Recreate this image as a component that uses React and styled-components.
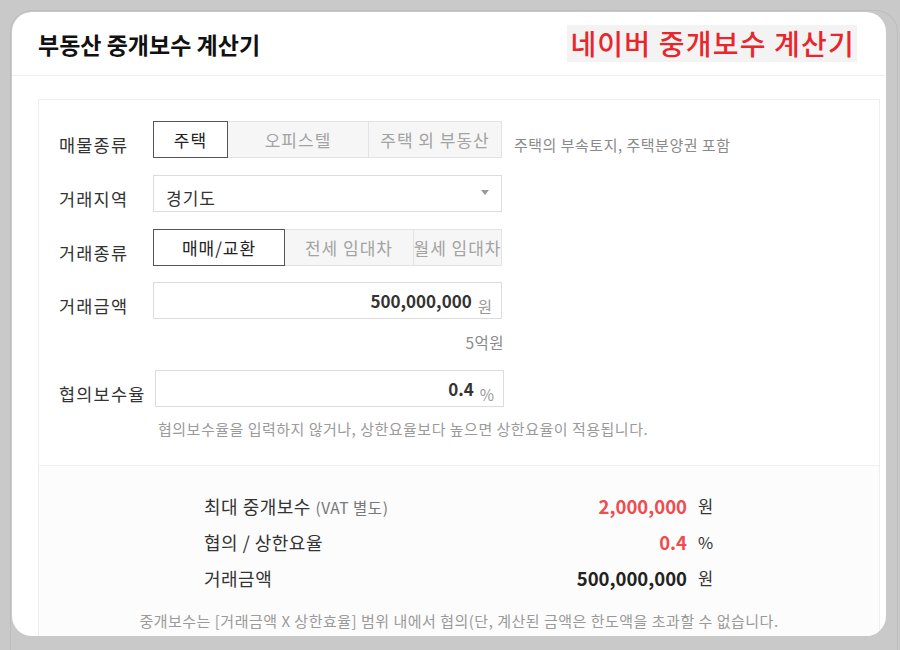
import React from "react";
import styled, { createGlobalStyle } from "styled-components";

const GlobalStyle = createGlobalStyle`
  html, body {
    margin: 0;
    padding: 0;
    background: #c9c9c9;
    overflow: hidden;
  }
  body {
    font-family: "Noto Sans CJK KR", "Noto Sans", sans-serif;
    color: #333;
  }
`;

const Page = styled.div`
  width: 900px;
  height: 650px;
  padding: 10px 0 0 10px;
  box-sizing: border-box;
  overflow: hidden;
`;

const Frame = styled.div`
  width: 888px;
  height: 660px;
  box-sizing: border-box;
  border: 1px solid #bdbdbd;
  border-bottom: none;
  border-radius: 22px 22px 0 0;
  padding: 1px;
`;

const Card = styled.div`
  width: 874px;
  height: 624px;
  background: #fff;
  border-radius: 20px;
  overflow: hidden;
`;

const Header = styled.div`
  height: 63px;
  border-bottom: 1px solid #efefef;
  display: flex;
  align-items: center;
  justify-content: space-between;
  padding: 0 29px 0 26px;
`;

const Title = styled.h1`
  margin: 0;
  font-size: 23px;
  font-weight: 700;
  color: #111;
`;

const Badge = styled.div`
  background: #f3f3f3;
  color: #e8262b;
  font-size: 28px;
  font-weight: 500;
  letter-spacing: 1.2px;
  height: 37px;
  line-height: 37px;
  padding: 0 2px 0 3px;
`;

const Body = styled.div`
  padding: 23px 0 0 26px;
`;

const Box = styled.div`
  width: 842px;
  box-sizing: border-box;
  border: 1px solid #eeeeee;
  border-bottom: none;
`;

const Form = styled.div`
  padding: 21px 0 26px 20px;
  display: flex;
  flex-direction: column;
`;

const Row = styled.div`
  display: flex;
  align-items: center;
  height: 37px;
  margin-top: ${p => p.$gap || 0}px;
`;

const Label = styled.div`
  width: 94px;
  padding-top: 10px;
  font-size: 17.5px;
  letter-spacing: 1.2px;
  color: #333;
`;

const Segments = styled.div`
  display: flex;
  width: 349px;
  height: 37px;
`;

const Seg = styled.div`
  width: ${p => p.$w}px;
  box-sizing: border-box;
  display: flex;
  align-items: center;
  justify-content: center;
  font-size: 17px;
  letter-spacing: 1px;
  white-space: nowrap;
  overflow: hidden;
  background: ${p => (p.$on ? "#fff" : "#f6f6f6")};
  color: ${p => (p.$on ? "#222" : "#a3a3a3")};
  border: 1px solid ${p => (p.$on ? "#555" : "#e3e3e3")};
  & + & {
    border-left: ${p => (p.$on ? "1px solid #555" : "none")};
  }
`;

const Helper = styled.div`
  margin-left: 12px;
  padding-top: 10px;
  font-size: 15px;
  letter-spacing: 0.5px;
  color: #8a8a8a;
`;

const Select = styled.div`
  width: 349px;
  height: 37px;
  box-sizing: border-box;
  border: 1px solid #dcdcdc;
  display: flex;
  align-items: center;
  justify-content: space-between;
  padding: 8px 12px 0 12px;
  font-size: 17px;
  letter-spacing: 1px;
  color: #333;
`;

const Caret = styled.span`
  width: 0;
  height: 0;
  margin-bottom: 10px;
  border-left: 4px solid transparent;
  border-right: 4px solid transparent;
  border-top: 5px solid #9a9a9a;
`;

const Input = styled.div`
  width: 349px;
  height: 37px;
  box-sizing: border-box;
  border: 1px solid #dcdcdc;
  display: flex;
  align-items: center;
  justify-content: flex-end;
  padding-right: 9px;
  margin-left: ${p => p.$shift || 0}px;
`;

const Value = styled.span`
  font-size: 17px;
  font-weight: 700;
  color: #333;
`;

const Unit = styled.span`
  font-size: 15.5px;
  color: #999;
  margin-left: 6px;
  padding-top: 10px;
`;

const Sub = styled.div`
  width: 351px;
  margin: 13px 0 0 94px;
  text-align: right;
  font-size: 15.5px;
  letter-spacing: 0.5px;
  line-height: 20px;
  color: #8a8a8a;
`;

const Hint = styled.div`
  margin: 12px 0 0 99px;
  font-size: 15px;
  letter-spacing: 0.5px;
  line-height: 20px;
  color: #9a9a9a;
`;

const Result = styled.div`
  background: #fcfcfc;
  border-top: 1px solid #efefef;
  padding-top: 22px;
  height: 200px;
`;

const ResultRow = styled.div`
  width: 510px;
  margin: 0 auto;
  height: 36px;
  display: flex;
  align-items: center;
`;

const ResultLabel = styled.div`
  flex: 1;
  font-size: 18px;
  letter-spacing: 0.5px;
  color: #333;
  small {
    font-size: 15.5px;
    color: #777;
  }
`;

const ResultValue = styled.div`
  font-size: 18.5px;
  font-weight: 700;
  color: ${p => (p.$red ? "#f04b4d" : "#222")};
`;

const ResultUnit = styled.div`
  width: 16px;
  margin-left: 11px;
  font-size: 16.5px;
  color: #333;
`;

const Footer = styled.div`
  margin-top: 15px;
  text-align: center;
  font-size: 15px;
  letter-spacing: 0.5px;
  line-height: 20px;
  color: #9a9a9a;
`;

const propertyTypes = [
  { name: "주택", w: 75, on: true },
  { name: "오피스텔", w: 141 },
  { name: "주택 외 부동산", w: 133 },
];

const dealTypes = [
  { name: "매매/교환", w: 132, on: true },
  { name: "전세 임대차", w: 129 },
  { name: "월세 임대차", w: 88 },
];

const results = [
  { label: "최대 중개보수", note: "(VAT 별도)", value: "2,000,000", unit: "원", red: true },
  { label: "협의 / 상한요율", value: "0.4", unit: "%", red: true },
  { label: "거래금액", value: "500,000,000", unit: "원" },
];

const App = () => (
  <>
    <GlobalStyle />
    <Page>
      <Frame>
        <Card>
          <Header>
            <Title>부동산 중개보수 계산기</Title>
            <Badge>네이버 중개보수 계산기</Badge>
          </Header>
          <Body>
            <Box>
              <Form>
                <Row>
                  <Label>매물종류</Label>
                  <Segments>
                    {propertyTypes.map(t => (
                      <Seg key={t.name} $w={t.w} $on={t.on}>
                        {t.name}
                      </Seg>
                    ))}
                  </Segments>
                  <Helper>주택의 부속토지, 주택분양권 포함</Helper>
                </Row>
                <Row $gap={17}>
                  <Label>거래지역</Label>
                  <Select>
                    <span>경기도</span>
                    <Caret />
                  </Select>
                </Row>
                <Row $gap={17}>
                  <Label>거래종류</Label>
                  <Segments>
                    {dealTypes.map(t => (
                      <Seg key={t.name} $w={t.w} $on={t.on}>
                        {t.name}
                      </Seg>
                    ))}
                  </Segments>
                </Row>
                <Row $gap={16}>
                  <Label>거래금액</Label>
                  <Input>
                    <Value>500,000,000</Value>
                    <Unit>원</Unit>
                  </Input>
                </Row>
                <Sub>5억원</Sub>
                <Row $gap={18}>
                  <Label>협의보수율</Label>
                  <Input $shift={2}>
                    <Value>0.4</Value>
                    <Unit>%</Unit>
                  </Input>
                </Row>
                <Hint>
                  협의보수율을 입력하지 않거나, 상한요율보다 높으면 상한요율이 적용됩니다.
                </Hint>
              </Form>
              <Result>
                {results.map(r => (
                  <ResultRow key={r.label}>
                    <ResultLabel>
                      {r.label} {r.note && <small>{r.note}</small>}
                    </ResultLabel>
                    <ResultValue $red={r.red}>{r.value}</ResultValue>
                    <ResultUnit>{r.unit}</ResultUnit>
                  </ResultRow>
                ))}
                <Footer>
                  중개보수는 [거래금액 X 상한효율] 범위 내에서 협의(단, 계산된 금액은 한도액을 초과할 수 없습니다.
                </Footer>
              </Result>
            </Box>
          </Body>
        </Card>
      </Frame>
    </Page>
  </>
);

export default App;
